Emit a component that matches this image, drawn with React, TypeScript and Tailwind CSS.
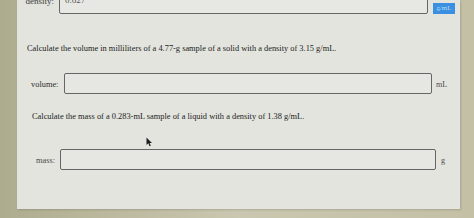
import React from 'react';

const serif = { fontFamily: '"Liberation Serif", "Times New Roman", serif' };

export default function App() {
  return (
    <div
      className="relative w-[474px] h-[218px] overflow-hidden bg-gradient-to-r from-[#aeac8f] via-[#cac7b0] to-[#c3c0a6] flex"
      style={serif}
    >
      <div className="ml-[17px] w-[443px] h-[209px] bg-[#e3e4de] shadow-[1px_1px_2px_rgba(0,0,0,0.15)] flex flex-col text-[8.4px] leading-[10px]">
        {/* density row (cut off at top) */}
        <div className="-mt-[7px] h-[21px] flex items-center">
          <span className="w-[38px] text-right pr-[1px] text-[#3a3a3a] text-[9px] -mt-[6px]">density:</span>
          <div className="ml-[4px] w-[369px] h-[21px] border-[1.5px] border-[#666] rounded-[2px] bg-[#e7e8e3] flex items-start pl-[5px] pt-[1px] text-[#555] text-[9px]">
            0.627
          </div>
          <div className="ml-[5px] mt-[10px] w-[22px] h-[11px] bg-[#3a8fe0] text-[#b5d8f7] text-[7px] leading-[11px] text-center">
            g/mL
          </div>
        </div>

        <p className="mt-[30px] ml-[10px] text-[#1c1c1c]">
          Calculate the volume in milliliters of a 4.77-g sample of a solid with a density of 3.15 g/mL.
        </p>

        {/* volume row */}
        <div className="mt-[19px] h-[21px] flex items-center">
          <span className="ml-[14px] w-[33px] text-[#2e2e2e] mt-[3px]">volume:</span>
          <div className="w-[368px] h-[21px] border-[1.5px] border-[#666] rounded-[2px] bg-[#e6e7e2]" />
          <span className="ml-[4px] text-[#4a4a4a] text-[8px] mt-[2px]">mL</span>
        </div>

        <p className="mt-[18px] ml-[15px] text-[#1c1c1c]">
          Calculate the mass of a 0.283-mL sample of a liquid with a density of 1.38 g/mL.
        </p>

        {/* mass row */}
        <div className="mt-[27px] h-[21px] flex items-center">
          <span className="ml-[19px] w-[24px] text-[#4a4a4a] mt-[2px]">mass:</span>
          <div className="w-[376px] h-[21px] border-[1.5px] border-[#666] rounded-[2px] bg-[#e6e7e2]" />
          <span className="ml-[5px] text-[#4a4a4a] text-[8px] mt-[2px]">g</span>
        </div>
      </div>

      {/* mouse cursor */}
      <svg className="absolute left-[146px] top-[137px]" width="7" height="10" viewBox="0 0 7 10">
        <path d="M0.5 0.5 L0.5 8 L2.3 6.3 L3.6 9.3 L4.8 8.8 L3.6 5.9 L6 5.9 Z" fill="#1e1e1e" />
      </svg>
    </div>
  );
}
